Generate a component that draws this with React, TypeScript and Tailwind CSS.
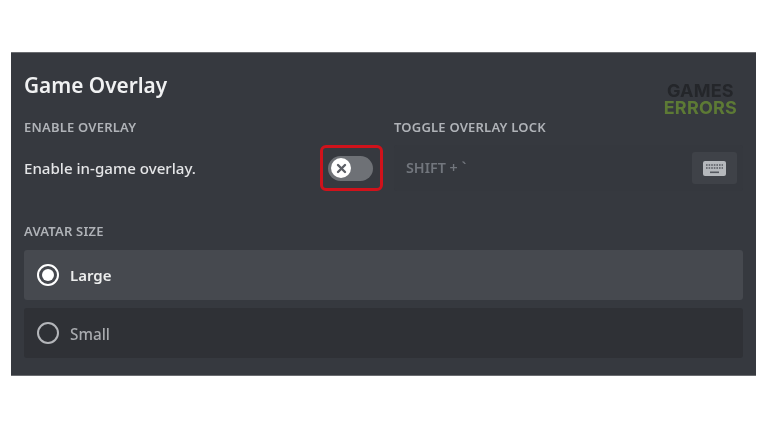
import React from "react";

const Label = ({ children }: { children: React.ReactNode }) => (
  <h3 className="text-[13px] leading-[16px] font-semibold tracking-[0.2px] text-[#b0b3b8]">{children}</h3>
);

const KeyboardIcon = () => (
  <svg width="23" height="15" viewBox="0 0 23 15">
    <rect width="23" height="15" rx="2" fill="#b5b8bc" />
    <path d="M3 4 H20 M3 7 H20" stroke="#55585f" strokeWidth="1.6" strokeDasharray="1.6 1" />
    <rect x="7" y="10.5" width="9" height="1.6" fill="#55585f" />
  </svg>
);

const ToggleOff = () => (
  <div className="flex items-center rounded-[6px] border-[3px] border-[#d0121b] px-[5px] w-[63px] h-[46px]">
    <div className="flex items-center w-[45px] h-[25px] rounded-full bg-[#6e7176] p-[3px]">
      <div className="flex items-center justify-center w-[20px] h-[20px] rounded-full bg-white">
        <svg width="11" height="11" viewBox="0 0 11 11">
          <path d="M2 2 L9 9 M9 2 L2 9" stroke="#5c5f66" strokeWidth="2.4" strokeLinecap="round" />
        </svg>
      </div>
    </div>
  </div>
);

const Radio = ({ checked }: { checked?: boolean }) => (
  <div
    className={`flex items-center justify-center w-[22px] h-[22px] rounded-full border-[2px] ${
      checked ? "border-white" : "border-[#b4b6ba]"
    }`}
  >
    {checked && <div className="w-[12px] h-[12px] rounded-full bg-white" />}
  </div>
);

export default function App() {
  return (
    <div className="w-[768px] h-[427px] bg-white pt-[52px] pl-[11px] font-['Noto_Sans','Open_Sans',sans-serif]">
      <div className="relative w-[745px] h-[324px] bg-[#36393f] border-y border-[#6a6c70] px-[13px] pt-[18px] text-white blur-[0.4px]">
        <h1 className="text-[20.8px] leading-[28px] font-semibold text-[#f0f1f2]">Game Overlay</h1>

        <div className="absolute top-[29px] right-[19px] text-center font-['Inter',sans-serif] text-[18px] leading-[17px] font-bold tracking-[0.2px]">
          <div className="text-[#24262a]">GAMES</div>
          <div className="text-[#5d7a35]">ERRORS</div>
        </div>

        <div className="flex mt-[20px]">
          <div className="w-[370px] pr-[11px]">
            <Label>ENABLE OVERLAY</Label>
            <div className="flex items-center justify-between mt-[10px]">
              <span className="text-[15.1px] font-medium text-[#e4e5e7]">Enable in-game overlay.</span>
              <ToggleOff />
            </div>
          </div>
          <div className="flex-1">
            <Label>TOGGLE OVERLAY LOCK</Label>
            <div className="flex items-center justify-between h-[46px] mt-[10px] pl-[12px] pr-[6px] rounded-[3px] bg-[#35383e]">
              <span className="text-[14.3px] font-semibold text-[#72767d]">SHIFT + `</span>
              <div className="flex items-center justify-center w-[45px] h-[32px] rounded-[3px] bg-[#3f4248]">
                <KeyboardIcon />
              </div>
            </div>
          </div>
        </div>

        <div className="mt-[32px]">
          <Label>AVATAR SIZE</Label>
          <div className="flex flex-col gap-[8px] mt-[11px] w-[719px]">
            <div className="flex items-center gap-[11px] h-[50px] px-[13px] rounded-[3px] bg-[#46494f]">
              <Radio checked />
              <span className="text-[15px] font-semibold text-[#eceded]">Large</span>
            </div>
            <div className="flex items-center gap-[11px] h-[50px] px-[13px] rounded-[3px] bg-[#2f3136]">
              <Radio />
              <span className="text-[15.3px] pt-[2px] font-medium text-[#a8aaae]">Small</span>
            </div>
          </div>
        </div>
      </div>
    </div>
  );
}
